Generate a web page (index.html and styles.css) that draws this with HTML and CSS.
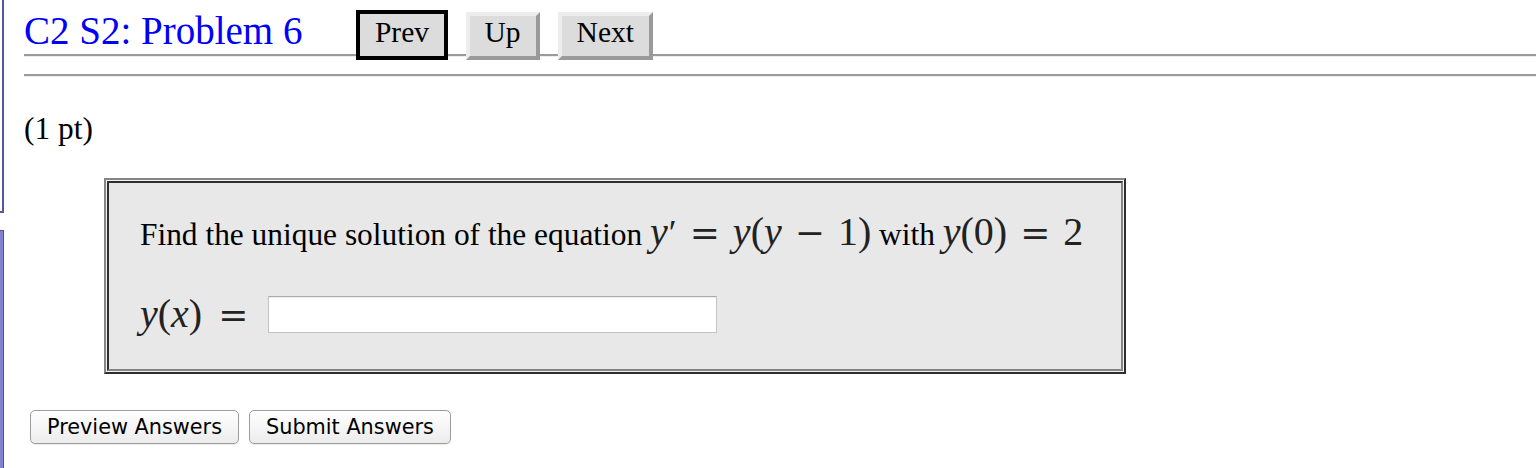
FILE: index.html
```html
<!DOCTYPE html>
<html>
<head>
<meta charset="utf-8">
<title>C2 S2: Problem 6</title>
<link rel="stylesheet" href="styles.css">
</head>
<body>
<div class="page">
  <div class="sidebar">
    <div class="side-top"></div>
    <div class="side-gap"></div>
    <div class="side-bottom"></div>
  </div>
  <div class="main">
    <div class="header">
      <h1 class="title">C2 S2: Problem 6</h1>
      <div class="nav">
        <span class="navbtn current">Prev</span>
        <span class="navbtn">Up</span>
        <span class="navbtn">Next</span>
      </div>
    </div>
    <div class="rule"></div>
    <div class="rule second"></div>
    <p class="points">(1 pt)</p>
    <div class="frame">
      <div class="problem">
        <p class="statement">Find the unique solution of the equation <span class="math"><span class="mi">y</span><span class="prime">′</span><span class="op">=</span><span class="mi">y</span>(<span class="mi">y</span><span class="op">−</span>1)</span> with <span class="math"><span class="mi">y</span>(0)<span class="op">=</span>2</span></p>
        <div class="answer">
          <span class="math"><span class="mi">y</span>(<span class="mi">x</span>)<span class="op">=</span></span>
          <input class="ans" type="text">
        </div>
      </div>
    </div>
    <div class="actions">
      <button class="btn">Preview Answers</button>
      <button class="btn">Submit Answers</button>
    </div>
  </div>
</div>
</body>
</html>
```

FILE: styles.css
```css
html, body {
  margin: 0;
  padding: 0;
  background: #ffffff;
}
body {
  font-family: "Liberation Serif", "Times New Roman", serif;
  color: #000;
  overflow: hidden;
}
.page {
  display: flex;
  min-height: 468px;
}
.sidebar {
  width: 4px;
  display: flex;
  flex-direction: column;
  flex-shrink: 0;
}
.side-top {
  height: 211px;
  border-right: 2px solid #58589c;
  border-bottom: 2px solid #58589c;
  box-sizing: content-box;
  width: 2px;
}
.side-gap {
  height: 17px;
}
.side-bottom {
  flex: 1;
  background: #8282d2;
  border-right: 1px solid #4f4f98;
  border-top: 1px solid #4f4f98;
}
.main {
  flex: 1;
  margin-left: 20px;
  min-width: 0;
}
.header {
  display: flex;
  align-items: flex-start;
  height: 54px;
}
.title {
  margin: 9px 0 0 0;
  font-size: 39px;
  line-height: 44px;
  font-weight: normal;
  color: #0000f8;
  white-space: nowrap;
}
.nav {
  display: flex;
  align-items: flex-end;
  gap: 18px;
  margin-left: 54px;
  margin-top: 10px;
  height: 50px;
}
.navbtn {
  display: block;
  font-size: 29.5px;
  line-height: 32px;
  padding: 0 15px 8px;
  background: #dcdcdc;
  border: 4px solid;
  border-color: #ededed #9a9a9a #9a9a9a #ededed;
  color: #000;
}
.navbtn.current {
  padding: 2px 14.5px 8px;
  border-color: #000;
}
.rule {
  height: 0;
  border-top: 2px solid #9a9a9a;
  border-bottom: 1px solid #ececec;
}
.rule.second {
  margin-top: 17px;
}
.points {
  margin: 34px 0 0 0;
  font-size: 31.4px;
  line-height: 36px;
}
.frame {
  margin: 31px 0 0 80px;
  width: 1022px;
  box-sizing: border-box;
  border: 2px solid;
  border-color: #858585 #2e2e2e #2e2e2e #858585;
  padding: 1px;
  background: #f4f4f4;
}
.problem {
  border: 2px solid;
  border-color: #2e2e2e #858585 #858585 #2e2e2e;
  background: #e8e8e8;
  padding: 34px 20px 36px 31px;
}
.statement {
  margin: 0;
  font-size: 31.4px;
  line-height: 36px;
  white-space: nowrap;
}
.math {
  font-size: 40px;
  line-height: 20px;
  color: #222;
}
.mi {
  font-style: italic;
}
.prime {
  font-size: 0.9em;
  margin-left: 1px;
}
.op {
  font-family: "DejaVu Serif", serif;
  font-size: 36px;
  margin: 0 13px;
}
.answer {
  display: flex;
  align-items: center;
  margin-top: 43px;
  height: 37px;
}
.answer .op {
  margin: 0 0 0 16px;
}
.ans {
  margin-left: 20px;
  width: 449px;
  height: 37px;
  box-sizing: border-box;
  border: 1px solid #c4c4c4;
  border-top-color: #aaaaaa;
  box-shadow: inset 0 1px 1px rgba(0, 0, 0, 0.08);
  background: #fff;
  padding: 0 4px;
  font-size: 18px;
}
.actions {
  display: flex;
  gap: 10px;
  margin: 36px 0 0 6px;
}
.btn {
  font-family: "DejaVu Sans", "Lucida Grande", sans-serif;
  font-size: 20.8px;
  line-height: 24px;
  height: 34px;
  padding: 4px 16px;
  color: #000;
  background: linear-gradient(#ffffff, #ececec);
  border: 1px solid #9d9d9d;
  border-radius: 5px;
  box-shadow: 0 1px 1px rgba(0, 0, 0, 0.08);
}
```
